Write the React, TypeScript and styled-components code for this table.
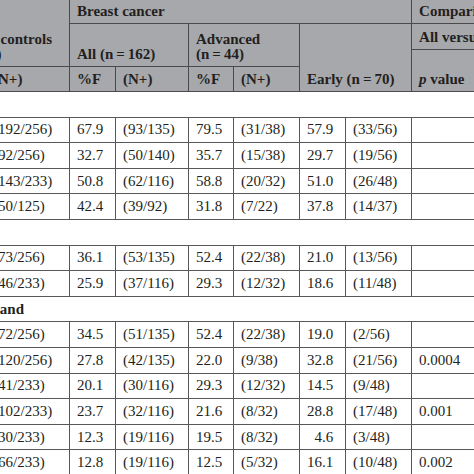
import React from "react";
import styled, { createGlobalStyle } from "styled-components";

const Global = createGlobalStyle`
  html, body { margin: 0; padding: 0; background: #ffffff; }
`;

const Frame = styled.div`
  width: 474px;
  height: 474px;
  overflow: hidden;
  background: #ffffff;
`;

const Table = styled.table`
  margin-left: -126px;
  margin-top: -1px;
  width: 647px;
  table-layout: fixed;
  border-collapse: collapse;
  font-family: "Liberation Serif", "Times New Roman", serif;
  font-size: 15px;
  color: #231f20;
`;

const HeadRow = styled.tr<{ $h: number }>`
  height: ${(p) => p.$h}px;
`;

const Th = styled.th<{ $nowrap?: boolean; $padLeft?: number }>`
  background: #a7a8ab;
  border: 1px solid #4a4a4a;
  padding: 0 7px 4px ${(p) => p.$padLeft ?? 7}px;
  text-align: left;
  vertical-align: bottom;
  font-weight: 700;
  line-height: 15px;
  white-space: ${(p) => (p.$nowrap ? "nowrap" : "normal")};
  overflow: hidden;
`;

const NoWrap = styled.span`
  white-space: nowrap;
`;

const Italic = styled.i`
  font-style: italic;
`;

const BodyRow = styled.tr`
  height: 25.6px;
`;

const Td = styled.td`
  border: 1px solid #585858;
  padding: 0 7px;
  vertical-align: middle;
  line-height: 15px;
  white-space: nowrap;
  overflow: hidden;
`;

const SectionCell = styled.td<{ $indent: number }>`
  border: none;
  padding: 0 0 0 ${(p) => p.$indent}px;
  font-weight: 700;
  vertical-align: middle;
  line-height: 15px;
  white-space: nowrap;
  overflow: hidden;
`;

type Row = {
  label: string;
  ctrl: string;
  ctrlN: string;
  all: string;
  allN: string;
  adv: string;
  advN: string;
  early: string;
  earlyN: string;
  p: string;
};

type Section = { title: string; indent: number; rows: Row[] };

const mk = (
  label: string,
  ctrl: string,
  ctrlN: string,
  all: string,
  allN: string,
  adv: string,
  advN: string,
  early: string,
  earlyN: string,
  p = ""
): Row => ({ label, ctrl, ctrlN, all, allN, adv, advN, early, earlyN, p });

const sections: Section[] = [
  {
    title: "Single antigens",
    indent: 7,
    rows: [
      mk("p53", "75.0", "(192/256)", "67.9", "(93/135)", "79.5", "(31/38)", "57.9", "(33/56)"),
      mk("HER2", "35.9", "(92/256)", "32.7", "(50/140)", "35.7", "(15/38)", "29.7", "(19/56)"),
      mk("MUC1", "61.4", "(143/233)", "50.8", "(62/116)", "58.8", "(20/32)", "51.0", "(26/48)"),
      mk("NY-ESO-1", "40.0", "(50/125)", "42.4", "(39/92)", "31.8", "(7/22)", "37.8", "(14/37)"),
    ],
  },
  {
    title: "Panels",
    indent: 7,
    rows: [
      mk("Panel A", "28.5", "(73/256)", "36.1", "(53/135)", "52.4", "(22/38)", "21.0", "(13/56)"),
      mk("Panel B", "19.7", "(46/233)", "25.9", "(37/116)", "29.3", "(12/32)", "18.6", "(11/48)"),
    ],
  },
  {
    title: "Estrogen receptor and",
    indent: 7,
    rows: [
      mk("ER+", "28.1", "(72/256)", "34.5", "(51/135)", "52.4", "(22/38)", "19.0", "(2/56)"),
      mk("ER\u2212", "46.9", "(120/256)", "27.8", "(42/135)", "22.0", "(9/38)", "32.8", "(21/56)", "0.0004"),
      mk("PR+", "17.6", "(41/233)", "20.1", "(30/116)", "29.3", "(12/32)", "14.5", "(9/48)"),
      mk("PR\u2212", "43.8", "(102/233)", "23.7", "(32/116)", "21.6", "(8/32)", "28.8", "(17/48)", "0.001"),
      mk("ER+/PR+", "12.9", "(30/233)", "12.3", "(19/116)", "19.5", "(8/32)", "\u20074.6", "(3/48)"),
      mk("ER\u2212/PR\u2212", "28.3", "(66/233)", "12.8", "(19/116)", "12.5", "(5/32)", "16.1", "(10/48)", "0.002"),
    ],
  },
];

const widths = [70, 41, 84, 46, 73, 45, 66, 46, 66, 110];

const n = (v: string) => `(n\u2009=\u2009${v})`;

export default function App() {
  return (
    <>
      <Global />
      <Frame>
        <Table>
          <colgroup>
            {widths.map((w, i) => (
              <col key={i} style={{ width: w }} />
            ))}
          </colgroup>
          <thead>
            <HeadRow $h={24}>
              <Th rowSpan={4}>Antibody</Th>
              <Th colSpan={2} rowSpan={3} $padLeft={1}>
                Healthy controls <NoWrap>{n("256")}</NoWrap>
              </Th>
              <Th colSpan={6}>Breast cancer</Th>
              <Th $nowrap>Comparison</Th>
            </HeadRow>
            <HeadRow $h={26}>
              <Th colSpan={2} rowSpan={2}>
                All <NoWrap>{n("162")}</NoWrap>
              </Th>
              <Th colSpan={2} rowSpan={2}>
                Advanced <NoWrap>{n("44")}</NoWrap>
              </Th>
              <Th colSpan={2} rowSpan={3}>
                Early <NoWrap>{n("70")}</NoWrap>
              </Th>
              <Th $nowrap>All versus controls</Th>
            </HeadRow>
            <HeadRow $h={17}>
              <Th rowSpan={2}>
                <Italic>p</Italic> value
              </Th>
            </HeadRow>
            <HeadRow $h={25}>
              <Th>%F</Th>
              <Th>(N+)</Th>
              <Th>%F</Th>
              <Th>(N+)</Th>
              <Th>%F</Th>
              <Th>(N+)</Th>
            </HeadRow>
          </thead>
          <tbody>
            {sections.map((s) => (
              <React.Fragment key={s.title}>
                <BodyRow>
                  <SectionCell colSpan={10} $indent={s.indent}>
                    {s.title}
                  </SectionCell>
                </BodyRow>
                {s.rows.map((r) => (
                  <BodyRow key={r.label}>
                    <Td>{r.label}</Td>
                    <Td>{r.ctrl}</Td>
                    <Td>{r.ctrlN}</Td>
                    <Td>{r.all}</Td>
                    <Td>{r.allN}</Td>
                    <Td>{r.adv}</Td>
                    <Td>{r.advN}</Td>
                    <Td>{r.early}</Td>
                    <Td>{r.earlyN}</Td>
                    <Td>{r.p}</Td>
                  </BodyRow>
                ))}
              </React.Fragment>
            ))}
          </tbody>
        </Table>
      </Frame>
    </>
  );
}
